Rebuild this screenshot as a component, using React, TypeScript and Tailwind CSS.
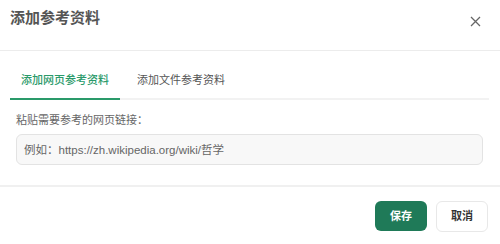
import { useState } from "react";

const tabs = ["添加网页参考资料", "添加文件参考资料"];

const font = "font-['Liberation_Sans','Noto_Sans_CJK_SC',sans-serif]";

export default function App() {
  const [active, setActive] = useState(0);
  const [url, setUrl] = useState("");

  return (
    <div className={`w-[500px] h-[244px] bg-white flex flex-col ${font}`}>
      {/* Header */}
      <div className="h-[51px] flex items-start justify-between pl-[10px] pr-[19px] border-b border-[#ececec]">
        <h2 className="mt-[8px] text-[15px] leading-[20px] font-bold text-[#555]">添加参考资料</h2>
        <button className="mt-[16px] w-[11px] h-[11px] text-[#666]" aria-label="关闭">
          <svg viewBox="0 0 11 11" width="11" height="11" fill="none" stroke="currentColor" strokeWidth="1.3">
            <path d="M1 1L10 10M10 1L1 10" />
          </svg>
        </button>
      </div>

      {/* Body */}
      <div className="h-[136px] flex flex-col border-b-2 border-[#f0f0f0]">
        <div className="mt-[11px] mx-[10px] w-[479px] flex border-b-2 border-[#f2f2f2]">
          {tabs.map((t, i) => (
            <button
              key={t}
              onClick={() => setActive(i)}
              className={`h-[38px] -mb-[2px] px-[11px] flex items-center text-[11px] leading-[16px] border-b-2 ${
                i === 0 ? "" : "ml-[6px]"
              } ${
                active === i
                  ? "border-[#2a9a6a] text-[#2a9a6a] font-medium"
                  : "border-transparent text-[#555]"
              }`}
            >
              {t}
            </button>
          ))}
        </div>

        <div className="pl-4 pr-[17px]">
          <label className="block mt-[12px] text-[11px] leading-[16px] text-[#666]">
            粘贴需要参考的网页链接：
          </label>
          <input
            value={url}
            onChange={(e) => setUrl(e.target.value)}
            placeholder="例如：https://zh.wikipedia.org/wiki/哲学"
            className="mt-[6px] w-full h-[31px] px-[7px] rounded-[6px] border border-[#e3e3e3] bg-[#f8f8f8] text-[11.5px] text-[#555] placeholder:text-[#666] outline-none"
          />
        </div>
      </div>

      {/* Footer */}
      <div className="flex-1 flex items-start justify-end gap-[9px] pt-[14px] pr-[12px]">
        <button className="w-[52px] h-[30px] rounded-[6px] bg-[#1f7a58] text-white text-[11px] font-bold">
          保存
        </button>
        <button className="w-[52px] h-[31px] rounded-[6px] border border-[#e8e8e8] bg-white text-[#333] text-[11px] font-bold">
          取消
        </button>
      </div>
    </div>
  );
}
